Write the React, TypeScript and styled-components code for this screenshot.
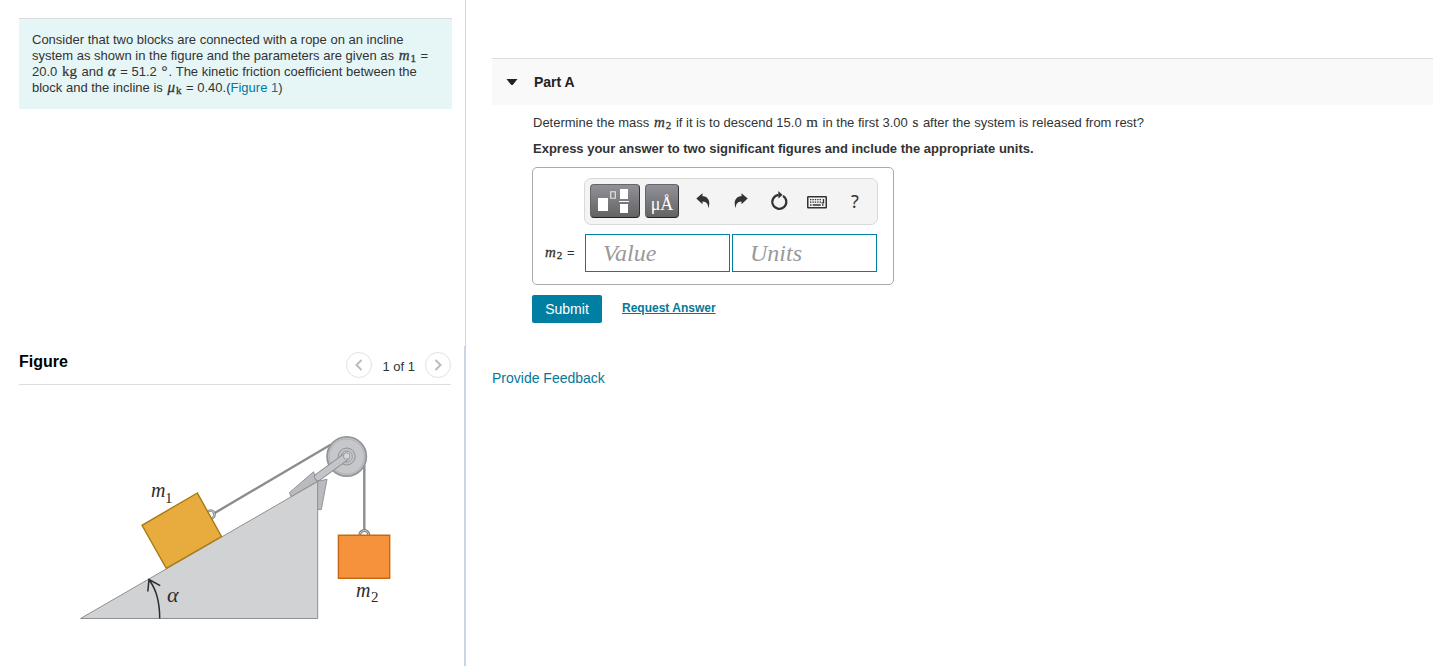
import React from 'react';
import styled, { createGlobalStyle } from 'styled-components';

const TEAL = '#007fa3';
const LINK = '#04789a';
const SERIF = '"Liberation Serif", "Times New Roman", serif';

const GlobalStyle = createGlobalStyle`
  *, *::before, *::after { box-sizing: border-box; }
  body {
    margin: 0;
    background: #fff;
    color: #333;
    font: 13px/16px "Liberation Sans", Arial, sans-serif;
  }
  h2, p { margin: 0; }
  button { font-family: inherit; cursor: pointer; }
`;

const Page = styled.div`
  display: grid;
  grid-template-columns: 466fr 967fr;
  min-height: 100vh;
`;

const Sidebar = styled.aside`
  display: flex;
  flex-direction: column;
`;

const Problem = styled.section`
  min-height: 346px;
  padding: 18px 13px 0 19px;
  border-right: 1px solid #cdd6e6;
`;

const ProblemText = styled.p`
  padding: 13px;
  border-top: 1px solid #d8dcdc;
  background: #e6f6f7;
`;

const FigurePanel = styled.section`
  flex: 1;
  padding: 0 13px 0 19px;
  border-right: 2px solid #c8d6e6;
`;

const FigureHeader = styled.header`
  display: flex;
  justify-content: space-between;
  align-items: center;
  height: 39px;
  border-bottom: 1px solid #ddd;
`;

const FigureTitle = styled.h2`
  padding-bottom: 6px;
  color: #000;
  font-size: 16px;
  line-height: 20px;
`;

const Pager = styled.nav`
  display: flex;
  align-items: center;
  gap: 10px;
`;

const PagerCount = styled.span`
  padding-top: 3px;
`;

const PagerButton = styled.button`
  display: grid;
  place-items: center;
  width: 26px;
  height: 26px;
  padding: 0;
  border: 1px solid #e2e2e2;
  border-radius: 50%;
  background: #fff;
`;

const Drawing = styled.svg`
  display: block;
  width: 340px;
  max-width: 100%;
  margin: 35px 0 0 51px;
`;

const Main = styled.main`
  padding: 58px 0 0 26px;
`;

const PartHeader = styled.button`
  display: flex;
  align-items: center;
  gap: 16px;
  width: 100%;
  height: 47px;
  padding: 0 14px;
  border: 0;
  border-top: 1px solid #ddd;
  background: #f9f9f9;
  color: #222;
  font-size: 14px;
  font-weight: bold;
`;

const PartBody = styled.div`
  display: flex;
  flex-direction: column;
  align-items: flex-start;
  gap: 10px;
  padding: 10px 20px 0 40px;
`;

const Question = styled.p`
  padding-left: 1px;
`;

const Instruction = styled(Question)`
  font-weight: bold;
`;

const MathText = styled.span<{ $upright?: boolean }>`
  padding: 0 1px;
  font-family: ${SERIF};
  font-size: 15px;
  font-style: ${(p) => (p.$upright ? 'normal' : 'italic')};
  line-height: 0;
  -webkit-text-stroke: ${(p) => (p.$upright ? '0.2px' : '0.3px')};
`;

const Sub = styled.sub`
  padding-left: 1px;
  font-size: 11px;
  font-style: normal;
  line-height: 0;
  vertical-align: -2px;
`;

const TextLink = styled.a<{ $kind?: 'strong' | 'large' }>`
  color: ${LINK};
  font-size: ${(p) => (p.$kind === 'strong' ? '12px' : p.$kind === 'large' ? '14px' : 'inherit')};
  font-weight: ${(p) => (p.$kind === 'strong' ? 'bold' : 'normal')};
  text-decoration: ${(p) => (p.$kind === 'strong' ? 'underline' : 'none')};
`;

const AnswerBox = styled.div`
  display: grid;
  grid-template-columns: 40px auto;
  align-items: center;
  row-gap: 9px;
  padding: 10px 15px 12px 11px;
  border: 1px solid #aaa;
  border-radius: 5px;
`;

const Toolbar = styled.div`
  grid-column: 2;
  display: flex;
  align-items: center;
  gap: 5px;
  height: 47px;
  padding: 0 5px 1px;
  border: 1px solid #d9d9d9;
  border-radius: 7px;
  background: #f4f4f4;
`;

const TemplateButton = styled.button<{ $wide?: boolean }>`
  display: grid;
  place-items: center;
  width: ${(p) => (p.$wide ? 50 : 34)}px;
  height: 34px;
  padding: ${(p) => (p.$wide ? 0 : '5px 0 0')};
  border: 1px solid #666;
  border-right-color: #333;
  border-bottom-color: #222;
  border-radius: 4px;
  background: linear-gradient(#91919a, #636363);
  color: #fff;
  font: 18px/24px ${SERIF};
`;

const ToolGroup = styled.div`
  display: flex;
  gap: 4px;
  padding-left: 2px;
`;

const ToolButton = styled.button`
  display: grid;
  place-items: center;
  width: 34px;
  height: 34px;
  padding: 0;
  border: 0;
  background: none;
  color: #333;
  font: 18px/24px "Noto Sans", sans-serif;
`;

const AnswerFields = styled.div`
  display: flex;
  gap: 2px;
  padding: 0 1px;
`;

const AnswerInput = styled.input`
  width: 145px;
  height: 38px;
  padding: 0 17px;
  border: 1px solid ${TEAL};
  background: #fff;
  color: #333;
  font: italic 24px/30px ${SERIF};
  &::placeholder { color: #999; opacity: 1; }
`;

const Actions = styled.div`
  display: flex;
  align-items: center;
  gap: 20px;
`;

const SubmitButton = styled.button`
  width: 70px;
  height: 28px;
  padding: 0;
  border: 0;
  border-radius: 2px;
  background: ${TEAL};
  color: #fff;
  font-size: 14px;
`;

const RequestLine = styled.p`
  padding-bottom: 2px;
`;

const Feedback = styled.footer`
  padding-top: 47px;
`;

const Mass = ({ n }: { n: number }) => (
  <MathText>m<Sub>{n}</Sub></MathText>
);

const Chevron = ({ d }: { d: string }) => (
  <svg width="12" height="14" viewBox="0 0 12 14" fill="none" stroke="#bbb" strokeWidth="2" aria-hidden="true">
    <path d={d} />
  </svg>
);

const InclineFigure = () => (
  <Drawing viewBox="70 420 340 210" role="img" aria-label="Two blocks joined by a rope over a pulley on an incline">
    <path d="M80.5 618.5 317.7 481.5V618.5Z" fill="#d1d2d4" stroke="#8e9093" />
    <g stroke="#8b8d90" strokeWidth="2.4" fill="none">
      <path d="M213 514 331 444.5M364.3 465V531" />
    </g>
    <circle cx="210.5" cy="514.5" r="4" fill="none" stroke="#77797c" strokeWidth="2.6" />
    <circle cx="210.5" cy="514.5" r="4" fill="none" stroke="#d5d6d8" strokeWidth="1" />
    <path d="M197.3 493 142 525.3 166.3 568.3 221.5 536.5Z" fill="#e8ab3d" stroke="#a87b12" strokeWidth="1.4" />
    <circle cx="346.7" cy="456.5" r="19.6" fill="#c5c7ca" stroke="#929497" strokeWidth="1.8" />
    <circle cx="346.7" cy="456.5" r="17.6" fill="none" stroke="#afb1b4" strokeWidth="1" />
    <circle cx="346.7" cy="456.5" r="8.5" fill="#c0c2c5" stroke="#929497" />
    <circle cx="346.7" cy="456.5" r="5.5" fill="#d6d7d9" stroke="#929497" />
    <path d="M289.5 492.5 313.5 471.8 317 481.5 290.8 496.6Z" fill="#b9bbbe" stroke="#929497" strokeWidth="1" />
    <path d="M317.7 481.5 327 479.2 321.3 509.6H317.7Z" fill="#b9bbbe" stroke="#929497" strokeWidth="1" />
    <path d="M346 456.8 318.2 477" stroke="#8b8d90" strokeWidth="8" strokeLinecap="round" />
    <path d="M346 456.8 318.2 477" stroke="#c3c5c8" strokeWidth="6.2" strokeLinecap="round" />
    <circle cx="346.7" cy="456" r="3.3" fill="#d6d7d9" stroke="#929497" strokeWidth=".9" />
    <path d="M359.8 535a4.5 4.5 0 0 1 9 0" fill="none" stroke="#77797c" strokeWidth="3" />
    <path d="M359.8 535a4.5 4.5 0 0 1 9 0" fill="none" stroke="#d5d6d8" strokeWidth="1" />
    <path d="M338.4 535.3H389.7V578.3H338.4Z" fill="#f6923b" stroke="#c46a16" strokeWidth="1.4" />
    <path d="M159.7 618.5Q159.7 594 149.5 580.5M147.8 591.5 149 579.5 160.2 585.7" fill="none" stroke="#2c2c2e" strokeWidth="1.5" />
    <g fill="#2c2c2e" fontFamily="Liberation Serif, serif" fontSize="20">
      <text x="151" y="497" fontStyle="italic">m</text>
      <text x="165" y="503" fontSize="15">1</text>
      <text x="167" y="602" fontStyle="italic" fontSize="22">α</text>
      <text x="356" y="597" fontStyle="italic">m</text>
      <text x="371" y="602" fontSize="15">2</text>
    </g>
  </Drawing>
);

const TemplateIcon = () => (
  <svg width="34" height="26" viewBox="0 0 34 26" fill="#fff" aria-hidden="true">
    <path d="M0 10h10v13H0zM22 1h8v10h-8zM22 16h8v9h-8zM21 13h10v1H21z" />
    <path d="M12.75 3.75h4.5v6.5h-4.5z" fill="none" stroke="#e8e8ea" strokeWidth="1.2" />
  </svg>
);

const UndoIcon = ({ flip = false }: { flip?: boolean }) => (
  <svg width="14" height="16" viewBox="0 0 14 16" fill="#333" aria-hidden="true">
    <path transform={flip ? 'translate(14 0) scale(-1 1)' : undefined} d="M.3 5.6 6.5.2V3.2C12 3.2 15 8 12.3 15.6 12.3 11.4 10.8 8.8 6.5 8.6V11.2Z" />
  </svg>
);

const ResetIcon = () => (
  <svg width="18" height="20" viewBox="0 0 18 20" aria-hidden="true">
    <path d="M13 4.9A7 7 0 1 1 8.6 3.9" fill="none" stroke="#333" strokeWidth="2.2" />
    <path d="M8.4 0 12.6 3.9 8.4 7.4Z" fill="#333" />
  </svg>
);

const KeyboardIcon = () => (
  <svg width="20" height="16" viewBox="0 0 20 16" fill="none" stroke="#333" aria-hidden="true">
    <rect x=".75" y="3.75" width="18.5" height="11" rx=".5" strokeWidth="1.5" />
    <path d="M3 6.7h12M3 9.2h11" strokeWidth="1.2" strokeDasharray="1.4 1" />
    <path d="M3 12h1.5M5.7 12h8M15 12h1.5M16.5 6v3.8h-2" strokeWidth="1.3" />
  </svg>
);

export default function App() {
  return (
    <>
      <GlobalStyle />
      <Page>
        <Sidebar>
          <Problem>
            <ProblemText>
              Consider that two blocks are connected with a rope on an incline system as shown in the figure and the
              parameters are given as <Mass n={1} /> = 20.0 <MathText $upright>kg</MathText> and{' '}
              <MathText>α</MathText> = 51.2 <MathText $upright>°</MathText>. The kinetic friction coefficient between
              the block and the incline is <MathText>μ<Sub>k</Sub></MathText> = 0.40.(<TextLink href="#figure">Figure 1</TextLink>)
            </ProblemText>
          </Problem>
          <FigurePanel id="figure">
            <FigureHeader>
              <FigureTitle>Figure</FigureTitle>
              <Pager aria-label="Figures">
                <PagerButton aria-label="Previous figure"><Chevron d="M8.5 2 3.5 7l5 5" /></PagerButton>
                <PagerCount>1 of 1</PagerCount>
                <PagerButton aria-label="Next figure"><Chevron d="m3.5 2 5 5-5 5" /></PagerButton>
              </Pager>
            </FigureHeader>
            <InclineFigure />
          </FigurePanel>
        </Sidebar>
        <Main>
          <PartHeader aria-expanded="true">
            <svg width="12" height="6" viewBox="0 0 12 6" aria-hidden="true"><path d="M.5 0h11L6.7 6H5.3Z" fill="#222" /></svg>
            Part A
          </PartHeader>
          <PartBody>
            <Question>
              Determine the mass <Mass n={2} /> if it is to descend 15.0 <MathText $upright>m</MathText> in the first
              3.00 <MathText $upright>s</MathText> after the system is released from rest?
            </Question>
            <Instruction>Express your answer to two significant figures and include the appropriate units.</Instruction>
            <AnswerBox>
              <Toolbar>
                <TemplateButton $wide aria-label="Templates"><TemplateIcon /></TemplateButton>
                <TemplateButton aria-label="Units symbols">μÅ</TemplateButton>
                <ToolGroup>
                  <ToolButton aria-label="Undo"><UndoIcon /></ToolButton>
                  <ToolButton aria-label="Redo"><UndoIcon flip /></ToolButton>
                  <ToolButton aria-label="Reset"><ResetIcon /></ToolButton>
                  <ToolButton aria-label="Keyboard shortcuts"><KeyboardIcon /></ToolButton>
                  <ToolButton aria-label="Help">?</ToolButton>
                </ToolGroup>
              </Toolbar>
              <label htmlFor="value"><Mass n={2} /> =</label>
              <AnswerFields>
                <AnswerInput id="value" placeholder="Value" />
                <AnswerInput aria-label="Units" placeholder="Units" />
              </AnswerFields>
            </AnswerBox>
            <Actions>
              <SubmitButton>Submit</SubmitButton>
              <RequestLine><TextLink href="#answer" $kind="strong">Request Answer</TextLink></RequestLine>
            </Actions>
          </PartBody>
          <Feedback>
            <TextLink href="#feedback" $kind="large">Provide Feedback</TextLink>
          </Feedback>
        </Main>
      </Page>
    </>
  );
}
